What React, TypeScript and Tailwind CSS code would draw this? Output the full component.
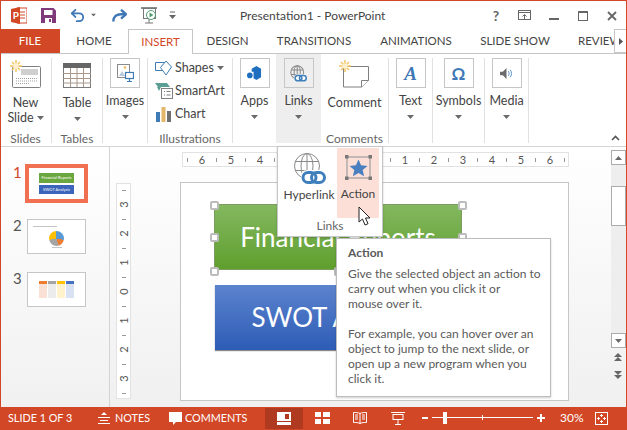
import React from 'react';
import { Undo2 } from 'lucide-react';

const font = "font-['Lato','Open_Sans',sans-serif]";

function Caret({ className = '' }: { className?: string }) {
  return (
    <svg width="7" height="4" viewBox="0 0 7 4" className={className}>
      <path d="M0 0h7L3.500 4z" fill="#6a6a6a" />
    </svg>
  );
}

function Sep() {
  return <div className="w-px h-[85px] bg-[#e1e1e1] shrink-0" />;
}

function IconBox({ children, className = '' }: { children: React.ReactNode; className?: string }) {
  return (
    <div className={`w-[30px] h-[30px] border border-[#c6c6c6] flex items-center justify-center shrink-0 ${className}`}>
      {children}
    </div>
  );
}

function BoxButton({ label, w, children }: { label: string; w: number; children: React.ReactNode }) {
  return (
    <div className="flex flex-col items-center shrink-0" style={{ width: w }}>
      <IconBox>{children}</IconBox>
      <div className="text-[12.500px] leading-[16px] mt-[5px] whitespace-nowrap">{label}</div>
      <Caret className="mt-[6px]" />
    </div>
  );
}

function Group({ label, w, children }: { label: string; w: number; children: React.ReactNode }) {
  return (
    <div className="h-[85px] relative shrink-0 flex justify-center" style={{ width: w }}>
      {children}
      <div className="absolute bottom-[-3px] left-0 right-0 text-center text-[12px] leading-[15px] text-[#666666]">{label}</div>
    </div>
  );
}

function NewSlideIcon() {
  return (
    <svg width="31" height="28" viewBox="0 0 31 28">
      <rect x="2.500" y="6.500" width="28" height="21" rx="1" fill="#fff" stroke="#7f7f7f" />
      <rect x="11" y="9" width="17" height="6" fill="#cfcfcf" />
      <path d="M6 18.500h21M6 21h21M6 23.500h14" stroke="#a0a0a0" strokeDasharray="1 1" />
      <g stroke="#f5c567" strokeWidth="1.500">
        <path d="M6 0v12M0 6h12M2 2l8 8M10 2l-8 8" />
      </g>
      <circle cx="6" cy="6" r="2.800" fill="#fff1cf" />
    </svg>
  );
}

function TableIcon() {
  return (
    <svg width="28" height="25" viewBox="0 0 28 25">
      <rect x="0.500" y="0.500" width="27" height="24" fill="#fff" stroke="#7a7a7a" />
      <rect width="28" height="5" fill="#666" />
      <path d="M7.500 5v19M14 5v19M20.500 5v19M0 10.500h28M0 15.500h28M0 20h28" stroke="#a9978a" />
    </svg>
  );
}

function ImagesIcon() {
  return (
    <svg width="17" height="19" viewBox="0 0 17 19">
      <rect x="0.500" y="0.500" width="12" height="13" fill="#fff" stroke="#8b8b8b" />
      <path d="M2 12l3-5 3 5z" fill="#b9c9de" />
      <circle cx="8" cy="3.500" r="1.300" fill="#f0b95c" />
      <rect x="8.500" y="8.500" width="8" height="6" fill="#fff" stroke="#3f7cb5" strokeWidth="1.200" />
      <path d="M12.500 15v2M10 17.500h5" stroke="#3f7cb5" strokeWidth="1.200" />
    </svg>
  );
}

function ShapesIcon() {
  return (
    <svg width="17" height="16" viewBox="0 0 17 16">
      <path d="M0.500 2.500h9v8h-9z" fill="none" stroke="#3f7cb5" />
      <path d="M11 1l5.500 6-5.500 8-5.500-7.500z" fill="#fff" stroke="#3f7cb5" />
    </svg>
  );
}

function SmartArtIcon() {
  return (
    <svg width="18" height="16" viewBox="0 0 18 16">
      <path d="M0 0h12l3 4H3z" fill="#5b9e93" />
      <path d="M2 4h4L4 8z" fill="#5b9e93" />
      <rect x="6.500" y="5.500" width="11" height="10" fill="#fff" stroke="#7f7f7f" />
      <path d="M9 8.500h1M9 12h1M11.500 8.500h4M11.500 12h4" stroke="#7f7f7f" />
    </svg>
  );
}

function ChartIcon() {
  return (
    <svg width="15" height="15" viewBox="0 0 15 15">
      <rect x="0" y="5" width="4" height="10" fill="#3f7cb5" />
      <rect x="5.500" y="0" width="4" height="15" fill="#e4b668" />
      <rect x="11" y="4" width="4" height="11" fill="#6f6f6f" />
    </svg>
  );
}

function AppsIcon() {
  return (
    <svg width="15" height="15" viewBox="0 0 16 16">
      <path d="M5 3l5-3 5 3v9l-5 3-3-2V6H5z" fill="#1f6fc0" />
      <circle cx="3" cy="10" r="3" fill="#1f6fc0" />
    </svg>
  );
}

function GlobeLink({ big = false }: { big?: boolean }) {
  return (
    <svg width={big ? 33 : 17} height={big ? 31 : 17} viewBox="0 0 33 31">
      <g fill="none" stroke="#8a8a8a" strokeWidth={big ? 1 : 2}>
        <circle cx="14" cy="13" r="12.500" />
        <ellipse cx="14" cy="13" rx="6" ry="12.500" />
        <path d="M14 0.500v25M2 8.500h24M2 17.500h24" />
      </g>
      <rect x="8" y="17" width="25" height="14" rx="6" fill="#fff" />
      <g fill="none" stroke="#3f7fbc" strokeWidth="3">
        <rect x="10" y="19.500" width="13" height="10" rx="5" />
        <rect x="18.500" y="19.500" width="13" height="10" rx="5" />
      </g>
    </svg>
  );
}

function CommentIcon() {
  return (
    <svg width="31" height="28" viewBox="0 0 31 28">
      <path d="M4.500 6.500h25v14l-7 6.500h-18z" fill="#fff" stroke="#7f7f7f" />
      <path d="M22.500 27v-6.500h7" fill="#fff" stroke="#7f7f7f" />
      <g stroke="#f5c567" strokeWidth="1.500">
        <path d="M6 0v12M0 6h12M2 2l8 8M10 2l-8 8" />
      </g>
      <circle cx="6" cy="6" r="2.600" fill="#fff1cf" />
    </svg>
  );
}

function SpeakerIcon() {
  return (
    <svg width="13" height="13" viewBox="0 0 14 14">
      <path d="M0 5h3l4-4v12l-4-4H0z" fill="#6b6b6b" />
      <path d="M9 4.500c1 1.500 1 3.500 0 5M11 3c1.800 2.400 1.800 5.600 0 8" fill="none" stroke="#4b86c2" />
    </svg>
  );
}

function ActionIcon() {
  return (
    <svg width="27" height="25" viewBox="0 0 27 25">
      <rect x="2" y="2" width="23" height="21" fill="none" stroke="#8d8d8d" />
      <g fill="#777">
        <rect x="0" y="0" width="3.500" height="3.500" />
        <rect x="23.500" y="0" width="3.500" height="3.500" />
        <rect x="0" y="21.500" width="3.500" height="3.500" />
        <rect x="23.500" y="21.500" width="3.500" height="3.500" />
      </g>
      <path d="M13.500 4.500l2.600 5.800 6.400.6-4.800 4.200 1.400 6.200-5.600-3.200-5.600 3.200 1.400-6.200L4.500 10.900l6.400-.6z" fill="#4a80bf" />
    </svg>
  );
}

function Tab({ label, w }: { label: string; w: number }) {
  return (
    <div className="text-[11.500px] text-[#444] whitespace-nowrap shrink-0 flex items-center justify-center" style={{ width: w }}>
      {label}
    </div>
  );
}

function Thumb({ n, active, children }: { n: number; active?: boolean; children: React.ReactNode }) {
  return (
    <div className="flex items-start">
      <div className={`w-[24px] pl-[12px] text-[15px] leading-[16px] ${active ? 'text-[#d24726]' : 'text-[#555] -mt-[2px]'}`}>{n}</div>
      <div className={active ? 'border-[4px] border-[#f27052] bg-white w-[63px] h-[39px] flex flex-col items-center justify-center gap-[2px]' : 'border border-[#c6c6c6] bg-white w-[59px] h-[35px] ml-[2px] flex flex-col items-center justify-center'}>
        {children}
      </div>
    </div>
  );
}

function Handle({ className }: { className: string }) {
  return <div className={`absolute w-[9px] h-[9px] rounded-[2px] bg-white border-2 border-[#bcbcbc] ${className}`} />;
}

function VRuler() {
  const nums = ['3', '2', '1', '0', '1', '2', '3'];
  return (
    <div className="w-[15px] h-[216px] mt-px bg-white border border-[#e2e2e2] flex flex-col items-center pt-[6px] shrink-0">
      {nums.map((n, i) => (
        <div key={i} className="h-[29px] w-full shrink-0 relative text-[11px] text-[#555]">
          <div className="w-[4px] h-px bg-[#999] mx-auto" />
          <div className="-rotate-90 text-center leading-[13px] mt-[7px]">{n}</div>
        </div>
      ))}
      <div className="w-[4px] h-px bg-[#999] shrink-0" />
    </div>
  );
}

function HRuler() {
  const nums = ['6', '5', '4', '3', '2', '1', '0', '1', '2', '3', '4', '5', '6'];
  return (
    <div className="h-[15px] w-[387px] bg-white border border-[#e2e2e2] flex items-center pl-[4px] text-[11px] text-[#555]">
      {nums.map((n, i) => (
        <div key={i} className="w-[29px] h-full shrink-0 flex items-center">
          <div className="w-px h-[4px] bg-[#999]" />
          <span className="flex-1 text-center leading-[13px]">{n}</span>
        </div>
      ))}
      <div className="w-px h-[4px] bg-[#999]" />
    </div>
  );
}

export default function App() {
  return (
    <div className={`w-[627px] h-[430px] overflow-hidden relative bg-white border-x border-t border-[#d24726] flex flex-col text-[#444] ${font}`}>
      {/* Title bar */}
      <div className="h-[28px] shrink-0 flex items-center relative">
        <svg width="16" height="17" viewBox="0 0 16 17" className="ml-[10px]">
          <path d="M6 1h10v15H6z" fill="#fff" stroke="#d24726" />
          <path d="M9 5h5M9 8h5M9 11h5" stroke="#d24726" />
          <path d="M0 2l9-2v17l-9-2z" fill="#d24726" />
          <text x="1.800" y="12" fontSize="10" fontWeight="700" fill="#fff">P</text>
        </svg>
        <svg width="15" height="15" viewBox="0 0 15 15" className="ml-[14px]">
          <path d="M0 0h12.500L15 2.500V15H0z" fill="#80397b" />
          <rect x="3" y="2" width="8.500" height="5" fill="#fff" />
          <rect x="4" y="10" width="7" height="5" fill="#fff" />
          <rect x="8" y="11" width="2" height="3" fill="#80397b" />
        </svg>
        <Undo2 size={17} strokeWidth={2.6} className="ml-[13px] text-[#3f78b5]" />
        <Caret className="ml-[4px] scale-75" />
        <svg width="15" height="13" viewBox="0 0 15 13" className="ml-[15px]">
          <path d="M1.300 12.500c0-5 3.500-7.300 7.500-7.300h5" fill="none" stroke="#3f78b5" strokeWidth="2.400" />
          <path d="M9 .8l5 4.400-5 4.400" fill="none" stroke="#3f78b5" strokeWidth="2.400" />
        </svg>
        <svg width="17" height="17" viewBox="0 0 17 17" className="ml-[14px]">
          <path d="M0 1h16" stroke="#666" strokeWidth="1.500" />
          <rect x="2.500" y="1.500" width="12" height="10" fill="#fff" stroke="#777" />
          <circle cx="10" cy="8" r="4.500" fill="#fff" stroke="#4d9b6e" />
          <path d="M8.500 5.500v5l4-2.500z" fill="#4d9b6e" />
          <path d="M8 12v4M4 16h8" stroke="#777" />
        </svg>
        <svg width="7" height="8" viewBox="0 0 7 8" className="ml-[11px]">
          <path d="M1 1h5" stroke="#666" />
          <path d="M0 4h7L3.500 8z" fill="#666" />
        </svg>
        <div className="absolute left-[239px] top-[6px] text-[12px] leading-[18px] text-[#444] whitespace-nowrap">Presentation1 - PowerPoint</div>
        <div className="absolute right-[9px] top-[8px] flex items-center h-[13px]">
          <span className="w-[10px] text-center font-bold text-[14px] leading-none text-[#666] mr-[17px]">?</span>
          <svg width="13" height="11" viewBox="0 0 13 11" className="mr-[18px]">
            <rect x="0.500" y="0.500" width="12" height="9" fill="none" stroke="#666" />
            <path d="M0 2.500h13" stroke="#666" />
            <path d="M6.500 9V5M4.500 6.500l2-2 2 2" fill="none" stroke="#666" />
          </svg>
          <div className="w-[10px] h-[2px] bg-[#666] mt-[7px] mr-[19px]" />
          <div className="w-[10px] h-[10px] border border-[#666] border-t-2 mr-[19px]" />
          <svg width="10" height="10" viewBox="0 0 10 10">
            <path d="M1 1l8 8M9 1l-8 8" stroke="#666" strokeWidth="1.800" />
          </svg>
        </div>
      </div>

      {/* Tabs */}
      <div className="h-[25px] shrink-0 flex items-stretch relative border-b border-[#c6c6c6] -ml-px">
        <div className="w-[60px] bg-[#d24726] text-white text-[11.500px] flex items-center justify-center shrink-0">FILE</div>
        <Tab label="HOME" w={68} />
        <div className="w-[65px] -mb-px border border-b-0 border-[#c6c6c6] bg-white text-[#d24726] text-[11.500px] flex items-center justify-center shrink-0">INSERT</div>
        <Tab label="DESIGN" w={69} />
        <Tab label="TRANSITIONS" w={104} />
        <Tab label="ANIMATIONS" w={100} />
        <Tab label="SLIDE SHOW" w={98} />
        <div className="text-[11.500px] text-[#444] whitespace-nowrap ml-[14px] self-center">REVIEW</div>
        <div className="absolute right-[-1px] top-0 w-[13px] h-[24px] bg-white border border-[#c6c6c6] flex items-center justify-center">
          <svg width="4" height="7" viewBox="0 0 4 7"><path d="M0 0l4 3.500L0 7z" fill="#555" /></svg>
        </div>
      </div>

      {/* Ribbon */}
      <div className="h-[93px] shrink-0 flex items-start pt-[4px] border-b border-[#d4d4d4] -ml-px relative">
        <Group label="Slides" w={51}>
          <div className="flex flex-col items-center pt-[2px] text-[12.500px] leading-[15px]">
            <NewSlideIcon />
            <div className="mt-[7px]">New</div>
            <div className="flex items-center gap-[3px]">Slide <Caret /></div>
          </div>
        </Group>
        <Sep />
        <Group label="Tables" w={50}>
          <div className="flex flex-col items-center pt-[5px] text-[12.500px] leading-[16px]">
            <TableIcon />
            <div className="mt-[7px]">Table</div>
            <Caret className="mt-[6px]" />
          </div>
        </Group>
        <Sep />
        <Group label="" w={44}>
          <BoxButton label="Images" w={44}><ImagesIcon /></BoxButton>
        </Group>
        <Sep />
        <Group label="Illustrations" w={84}>
          <div className="flex flex-col pt-[2px] w-full pl-[7px] text-[12.500px] leading-[16px] gap-[7px]">
            <div className="flex items-center gap-[3px] h-[16px]"><ShapesIcon />Shapes <Caret /></div>
            <div className="flex items-center gap-[2px] h-[16px]"><SmartArtIcon />SmartArt</div>
            <div className="flex items-center gap-[4px] h-[16px] ml-[1px]"><ChartIcon />Chart</div>
          </div>
        </Group>
        <Sep />
        <Group label="" w={43}>
          <BoxButton label="Apps" w={43}><AppsIcon /></BoxButton>
        </Group>
        <div className="w-[45px] h-[89px] -mt-[4px] pt-[4px] bg-[#eeeeee] shrink-0 flex justify-center">
          <BoxButton label="Links" w={45}><GlobeLink /></BoxButton>
        </div>
        <Group label="Comments" w={67}>
          <div className="flex flex-col items-center pt-[2px] text-[12.500px] leading-[16px]">
            <CommentIcon />
            <div className="mt-[7px]">Comment</div>
          </div>
        </Group>
        <Sep />
        <Group label="" w={43}>
          <BoxButton label="Text" w={43}>
            <span className="font-['Liberation_Serif'] italic font-bold text-[19px] leading-none text-[#3f78b5]">A</span>
          </BoxButton>
        </Group>
        <Sep />
        <Group label="" w={51}>
          <BoxButton label="Symbols" w={51}>
            <span className="font-bold text-[17px] leading-none text-[#3f78b5]">Ω</span>
          </BoxButton>
        </Group>
        <Sep />
        <Group label="" w={43}>
          <BoxButton label="Media" w={43}><SpeakerIcon /></BoxButton>
        </Group>
        <Sep />
        <svg width="9" height="6" viewBox="0 0 9 6" className="absolute right-[6px] bottom-[5px]">
          <path d="M1 5l3.500-3.500L8 5" fill="none" stroke="#555" strokeWidth="1.600" />
        </svg>
      </div>

      {/* Workspace */}
      <div className="flex-1 flex min-h-0 relative">
        <div className="w-[109px] border-r border-[#d4d4d4] bg-gradient-to-b from-white to-[#f1f1f1] pt-[17px] flex flex-col shrink-0">
          <Thumb n={1} active>
            <div className="w-[35px] h-[10px] bg-[#6aa83f] text-[4px] leading-[10px] text-white text-center whitespace-nowrap">Financial Reports</div>
            <div className="w-[35px] h-[9px] bg-[#3a65ba] text-[4px] leading-[9px] text-white text-center whitespace-nowrap">SWOT Analysis</div>
          </Thumb>
          <div className="h-[16px]" />
          <Thumb n={2}>
            <div className="w-[24px] h-px bg-[#c4c4c4] self-start ml-[5px] mb-[4px]" />
            <div className="w-[15px] h-[15px] rounded-full bg-[conic-gradient(#5b9bd5_0_28%,#ed7d31_28%_45%,#a5a5a5_45%_72%,#ffc000_72%_100%)]" />
            <div className="w-[10px] h-px bg-[#c4c4c4] mt-px" />
          </Thumb>
          <div className="h-[18px]" />
          <Thumb n={3}>
            <div className="flex gap-[1px]">
              <div className="w-[8px] h-[17px] bg-gradient-to-b from-[#ed7d31] from-20% to-[#fbe1d5] to-20%" />
              <div className="w-[8px] h-[17px] bg-gradient-to-b from-[#a5a5a5] from-20% to-[#ececec] to-20%" />
              <div className="w-[8px] h-[17px] bg-gradient-to-b from-[#ffc000] from-20% to-[#fff2cc] to-20%" />
              <div className="w-[8px] h-[17px] bg-gradient-to-b from-[#4472c4] from-20% to-[#d9e2f3] to-20%" />
            </div>
          </Thumb>
        </div>
        <div className="flex-1 bg-gradient-to-b from-white to-[#f0f0f0] relative flex flex-col overflow-hidden">
          <div className="pl-[72px] pt-[5px]"><HRuler /></div>
          <div className="flex pl-[6px] pt-[15px] items-start">
            <VRuler />
            <div className="ml-[49px] w-[389px] h-[219px] bg-white border border-[#c6c6c6] relative shrink-0">
              <div className="absolute left-[33px] top-[21px] w-[248px] h-[66px] border border-[#7e9b62] bg-gradient-to-b from-[#84b85f] to-[#5f9f2c] flex items-center justify-center">
                <span className="text-white text-[26px] whitespace-nowrap">Financial Reports</span>
              </div>
              <div className="absolute left-[34px] top-[102px] w-[247px] h-[65px] bg-gradient-to-b from-[#5c83cd] to-[#2d5cb6] shadow-[0_1px_1px_#888] flex items-center justify-center">
                <span className="text-white text-[26px] whitespace-nowrap">SWOT Analysis</span>
              </div>
              <Handle className="left-[29px] top-[18px]" />
              <Handle className="left-[29px] top-[50px]" />
              <Handle className="left-[29px] top-[84px]" />
              <Handle className="left-[153px] top-[84px]" />
              <Handle className="left-[277px] top-[18px]" />
              <Handle className="left-[277px] top-[50px]" />
              <Handle className="left-[277px] top-[84px]" />
            </div>
          </div>
          {/* Scrollbar */}
          <div className="absolute right-0 top-[3px] w-[15px] h-[198px] bg-[#eeeeee]">
            <div className="w-[15px] h-[15px] bg-white border border-[#ababab] flex items-center justify-center">
              <Caret className="rotate-180" />
            </div>
            <div className="w-[15px] h-[40px] mt-[21px] bg-white border border-[#ababab]" />
            <div className="absolute left-0 bottom-0 w-[15px] h-[15px] bg-white border border-[#ababab] flex items-center justify-center"><Caret /></div>
          </div>
          <svg width="8" height="8" viewBox="0 0 8 8" className="absolute right-[4px] top-[206px]">
            <path d="M0 8h8L4 4zM0 4h8L4 0z" fill="#666" />
          </svg>
          <svg width="8" height="8" viewBox="0 0 8 8" className="absolute right-[4px] top-[224px]">
            <path d="M0 0h8L4 4zM0 4h8L4 8z" fill="#666" />
          </svg>
        </div>

        {/* Links dropdown */}
        <div className="absolute left-[276px] top-[-1px] w-[106px] h-[91px] bg-white border border-[#c6c6c6] shadow-[0_1px_2px_rgba(0,0,0,0.2)] flex flex-col">
          <div className="flex h-[71px] pl-[4px] pt-px">
            <div className="w-[54px] flex flex-col items-center pt-[5px]">
              <GlobeLink big />
              <div className="text-[12px] leading-[16px] mt-[3px]">Hyperlink</div>
            </div>
            <div className="w-[42px] h-[70px] ml-px bg-[#fce0d8] flex flex-col items-center pt-[7px]">
              <ActionIcon />
              <div className="text-[12px] leading-[16px] mt-[6px]">Action</div>
            </div>
          </div>
          <div className="text-center text-[12px] leading-[15px] text-[#666]">Links</div>
        </div>

        {/* Cursor */}
        <svg width="14" height="20" viewBox="0 0 14 20" className="absolute left-[357px] top-[59px]">
          <path d="M1 1v15l3.500-3 2.500 6 3-1.300-2.500-5.700H12z" fill="#fff" stroke="#222" />
        </svg>

        {/* Tooltip */}
        <div className="absolute left-[335px] top-[91px] w-[215px] h-[159px] bg-white border border-[#bdbdbd] shadow-[0_1px_2px_rgba(0,0,0,0.2)] pl-[11px] pt-[4px] text-[#5a5a5a] text-[12px] leading-[15px]">
          <div className="font-bold leading-[20px] mb-[3px]">Action</div>
          <div>Give the selected object an action to</div>
          <div>carry out when you click it or</div>
          <div>mouse over it.</div>
          <div className="mt-[15px]">For example, you can hover over an</div>
          <div>object to jump to the next slide, or</div>
          <div>open up a new program when you</div>
          <div>click it.</div>
        </div>
      </div>

      {/* Status bar */}
      <div className="h-[23px] shrink-0 -mx-px bg-[#d24726] text-white text-[10.800px] flex items-center relative">
        <span className="absolute left-[8px] top-[3px] leading-[16px] whitespace-nowrap">SLIDE 1 OF 3</span>
        <svg width="12" height="13" viewBox="0 0 12 13" className="absolute left-[98px] top-[5px]">
          <path d="M6 0l3 3H3z" fill="#fff" />
          <path d="M0 5.500h12M2 8.500h8M0 11.500h12" stroke="#fff" />
        </svg>
        <span className="absolute left-[115px] top-[3px] leading-[16px]">NOTES</span>
        <svg width="13" height="13" viewBox="0 0 13 13" className="absolute left-[169px] top-[5px]">
          <path d="M0 0h13v10H7l-3 3v-3H0z" fill="#fff" />
        </svg>
        <span className="absolute left-[185px] top-[3px] leading-[16px]">COMMENTS</span>
        <div className="absolute left-[265px] top-px w-[38px] h-[21px] bg-[#b03a1f] flex items-center justify-center">
          <svg width="14" height="13" viewBox="0 0 14 13">
            <path d="M0 0h14v13H0z" fill="#fff" />
            <path d="M8 2h4v5H8z" fill="#b03a1f" />
            <path d="M2 2h5v7H2z" fill="#fff" />
            <path d="M0 9.500h14" stroke="#b03a1f" />
          </svg>
        </div>
        <svg width="15" height="13" viewBox="0 0 15 13" className="absolute left-[315px] top-[5px]">
          <path d="M0 0h6v5H0zM8 0h7v5H8zM0 7h6v5H0zM8 7h7v5H8z" fill="#fff" />
        </svg>
        <svg width="14" height="13" viewBox="0 0 14 13" className="absolute left-[353px] top-[5px]">
          <path d="M7 1.500C5 .5 3 .5.500.500v10c2.500 0 4.500 0 6.500 1 2-1 4-1 6.500-1V.500C11 .5 9 .5 7 1.500zM7 1.500v10" fill="none" stroke="#fff" />
          <path d="M2 3h3M2 5h3M2 7h3M9 3h3M9 5h3M9 7h3" stroke="#fff" />
        </svg>
        <svg width="14" height="13" viewBox="0 0 14 13" className="absolute left-[391px] top-[5px]">
          <path d="M0 .5h14" stroke="#fff" />
          <rect x="2" y="2.500" width="10" height="5" fill="none" stroke="#fff" />
          <path d="M7 8v4M4 12.500h6" stroke="#fff" />
        </svg>
        <div className="absolute left-[422px] top-[10px] w-[6px] h-[2px] bg-white" />
        <div className="absolute left-[432px] top-[10px] w-[101px] h-px bg-white" />
        <div className="absolute left-[443px] top-[5px] w-[4px] h-[12px] bg-white" />
        <div className="absolute left-[482px] top-[8px] w-px h-[5px] bg-white" />
        <svg width="8" height="8" viewBox="0 0 8 8" className="absolute left-[537px] top-[7px]">
          <path d="M3 0h2v3h3v2H5v3H3V5H0V3h3z" fill="#fff" />
        </svg>
        <span className="absolute left-[560px] top-[3px] leading-[16px] text-[12px]">30%</span>
        <svg width="13" height="13" viewBox="0 0 13 13" className="absolute left-[595px] top-[5px]">
          <rect x="0.500" y="0.500" width="12" height="12" fill="none" stroke="#fff" />
          <path d="M6.500 2v3M5 3.500h3M6.500 8v3M5 9.500h3M2 6.500h3M3.500 5v3M8 6.500h3M9.500 5v3" stroke="#fff" />
        </svg>
      </div>
    </div>
  );
}
